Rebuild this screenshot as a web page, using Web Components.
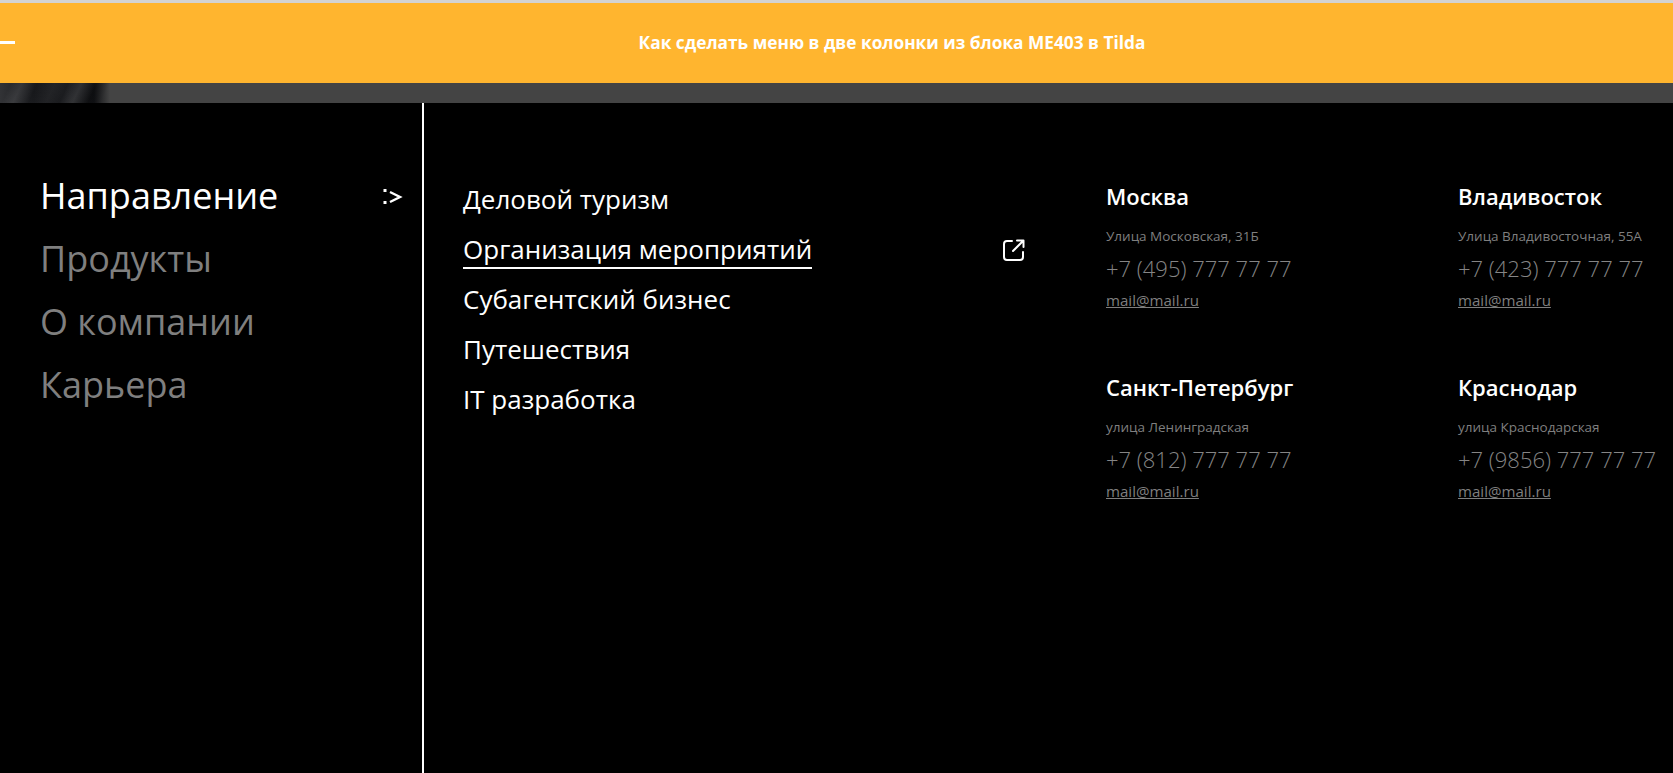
<!DOCTYPE html>
<html lang="ru">
<head>
<meta charset="utf-8">
<title>Меню</title>
<style>
  html, body { margin: 0; height: 100%; overflow: hidden; background: #000; }
  body { font-family: "Open Sans", "Noto Sans", sans-serif; }
</style>
</head>
<body>
<template id="tpl-banner">
  <style>
    :host { display: flex; align-items: center; justify-content: center; position: relative; box-sizing: border-box; height: 83px; padding: 0 0 2px 111px; background: #ffb52f; border-top: 3px solid #d3d3d3; color: #fff; font-size: 17.3px; font-weight: 700; }
    i { position: absolute; left: 0; top: 38px; width: 15px; height: 3px; background: #fff; }
  </style>
  <i></i><span><slot></slot></span>
</template>

<template id="tpl-strip">
  <style>
    :host { display: block; height: 20px; background:
      linear-gradient(115deg, transparent 0 10px, rgba(255,255,255,.09) 20px, transparent 34px, rgba(255,255,255,.04) 50px, transparent 62px, rgba(255,255,255,.1) 74px, rgba(0,0,0,.25) 88px, transparent 100px),
      linear-gradient(90deg, #323336 0, #17181b 34px, #1c1d20 70px, #111215 94px, #444 110px, #444 100%); }
  </style>
</template>

<template id="tpl-panel">
  <style>
    :host { display: grid; grid-template-columns: 422px 2px 1fr; height: 670px; background: #000; border-top-left-radius: 6px; }
    .rule { background: #fff; }
  </style>
  <slot name="side"></slot><div class="rule"></div><slot name="main"></slot>
</template>

<template id="tpl-side">
  <style>
    :host { display: flex; flex-direction: column; position: relative; padding: 61px 0 0 40px; color: #fff; font-size: 36px; font-weight: 400; line-height: 63px; }
    svg { position: absolute; left: 382px; top: 84px; }
  </style>
  <slot></slot>
  <svg width="22" height="18" viewBox="0 0 22 18" fill="none" stroke="#fff"><path d="M3 2v3M3 14v3" stroke-width="3"/><path d="M8 5l10 5-10 5" stroke-width="2.400"/></svg>
</template>

<template id="tpl-side-item">
  <style>
    :host { display: block; color: #7f7f7f; }
    :host([active]) { color: #fff; }
  </style>
  <slot></slot>
</template>

<template id="tpl-main">
  <style>
    :host { display: flex; align-items: flex-start; padding: 79px 0 0 39px; }
  </style>
  <slot></slot>
</template>

<template id="tpl-links">
  <style>
    :host { display: flex; flex-direction: column; gap: 15px; width: 562px; }
  </style>
  <slot></slot>
</template>

<template id="tpl-link">
  <style>
    :host { display: flex; align-items: flex-start; justify-content: space-between; height: 35px; color: #fff; font-size: 26px; line-height: 35px; }
    span { display: inline-block; height: 35px; }
    :host([active]) span { border-bottom: 2px solid #fff; }
    svg { display: none; align-self: center; }
    :host([active]) svg { display: block; }
  </style>
  <span><slot></slot></span>
  <svg width="22" height="22" viewBox="0 0 22 22" fill="none" stroke="#fff" stroke-width="2" stroke-linecap="round" stroke-linejoin="round"><path d="M9 2H4a3 3 0 0 0-3 3v13a3 3 0 0 0 3 3h13a3 3 0 0 0 3-3v-5"/><path d="M10 12l10-10M14 1.500h6.500V8"/></svg>
</template>

<template id="tpl-contacts">
  <style>
    :host { display: grid; grid-template-columns: 352px 1fr; row-gap: 54px; margin-left: 81px; }
  </style>
  <slot></slot>
</template>

<template id="tpl-office">
  <style>
    :host { display: block; height: 137px; white-space: nowrap; }
    h3 { margin: 0; font-size: 22px; font-weight: 600; line-height: 28px; color: #fff; }
    .addr { margin-top: 17px; font-size: 13.5px; line-height: 18px; color: #7f7f7f; }
    .tel { margin-top: 9px; font-size: 22px; font-weight: 300; line-height: 29px; color: #858585; }
    .mail { display: block; margin-top: 7px; font-size: 15.1px; line-height: 20px; color: #7f7f7f; text-decoration: underline; }
  </style>
  <h3></h3><div class="addr"></div><div class="tel"></div><a class="mail"></a>
</template>

<x-banner>Как сделать меню в две колонки из блока ME403 в Tilda</x-banner>
<x-strip></x-strip>
<x-panel>
  <x-side slot="side">
    <x-side-item active>Направление</x-side-item>
    <x-side-item>Продукты</x-side-item>
    <x-side-item>О компании</x-side-item>
    <x-side-item>Карьера</x-side-item>
  </x-side>
  <x-main slot="main">
    <x-links>
      <x-link>Деловой туризм</x-link>
      <x-link active>Организация мероприятий</x-link>
      <x-link>Субагентский бизнес</x-link>
      <x-link>Путешествия</x-link>
      <x-link>IT разработка</x-link>
    </x-links>
    <x-contacts>
      <x-office city="Москва" addr="Улица Московская, 31Б" tel="+7 (495) 777 77 77" mail="mail@mail.ru"></x-office>
      <x-office city="Владивосток" addr="Улица Владивосточная, 55А" tel="+7 (423) 777 77 77" mail="mail@mail.ru"></x-office>
      <x-office city="Санкт-Петербург" addr="улица Ленинградская" tel="+7 (812) 777 77 77" mail="mail@mail.ru"></x-office>
      <x-office city="Краснодар" addr="улица Краснодарская" tel="+7 (9856) 777 77 77" mail="mail@mail.ru"></x-office>
    </x-contacts>
  </x-main>
</x-panel>

<script>
  // every plain element just stamps its template into an open shadow root
  function stamp(name, id) {
    customElements.define(name, class extends HTMLElement {
      constructor() {
        super();
        let root = this.attachShadow({mode: 'open'});
        root.appendChild(document.getElementById(id).content.cloneNode(true));
      }
    });
  }
  stamp('x-banner', 'tpl-banner');
  stamp('x-strip', 'tpl-strip');
  stamp('x-panel', 'tpl-panel');
  stamp('x-side', 'tpl-side');
  stamp('x-side-item', 'tpl-side-item');
  stamp('x-main', 'tpl-main');
  stamp('x-links', 'tpl-links');
  stamp('x-link', 'tpl-link');
  stamp('x-contacts', 'tpl-contacts');

  customElements.define('x-office', class extends HTMLElement {
    constructor() {
      super();
      this.attachShadow({mode: 'open'}).appendChild(document.getElementById('tpl-office').content.cloneNode(true));
    }
    connectedCallback() {
      let r = this.shadowRoot;
      r.querySelector('h3').textContent = this.getAttribute('city');
      r.querySelector('.addr').textContent = this.getAttribute('addr');
      r.querySelector('.tel').textContent = this.getAttribute('tel');
      r.querySelector('.mail').textContent = this.getAttribute('mail');
    }
  });
</script>
</body>
</html>
